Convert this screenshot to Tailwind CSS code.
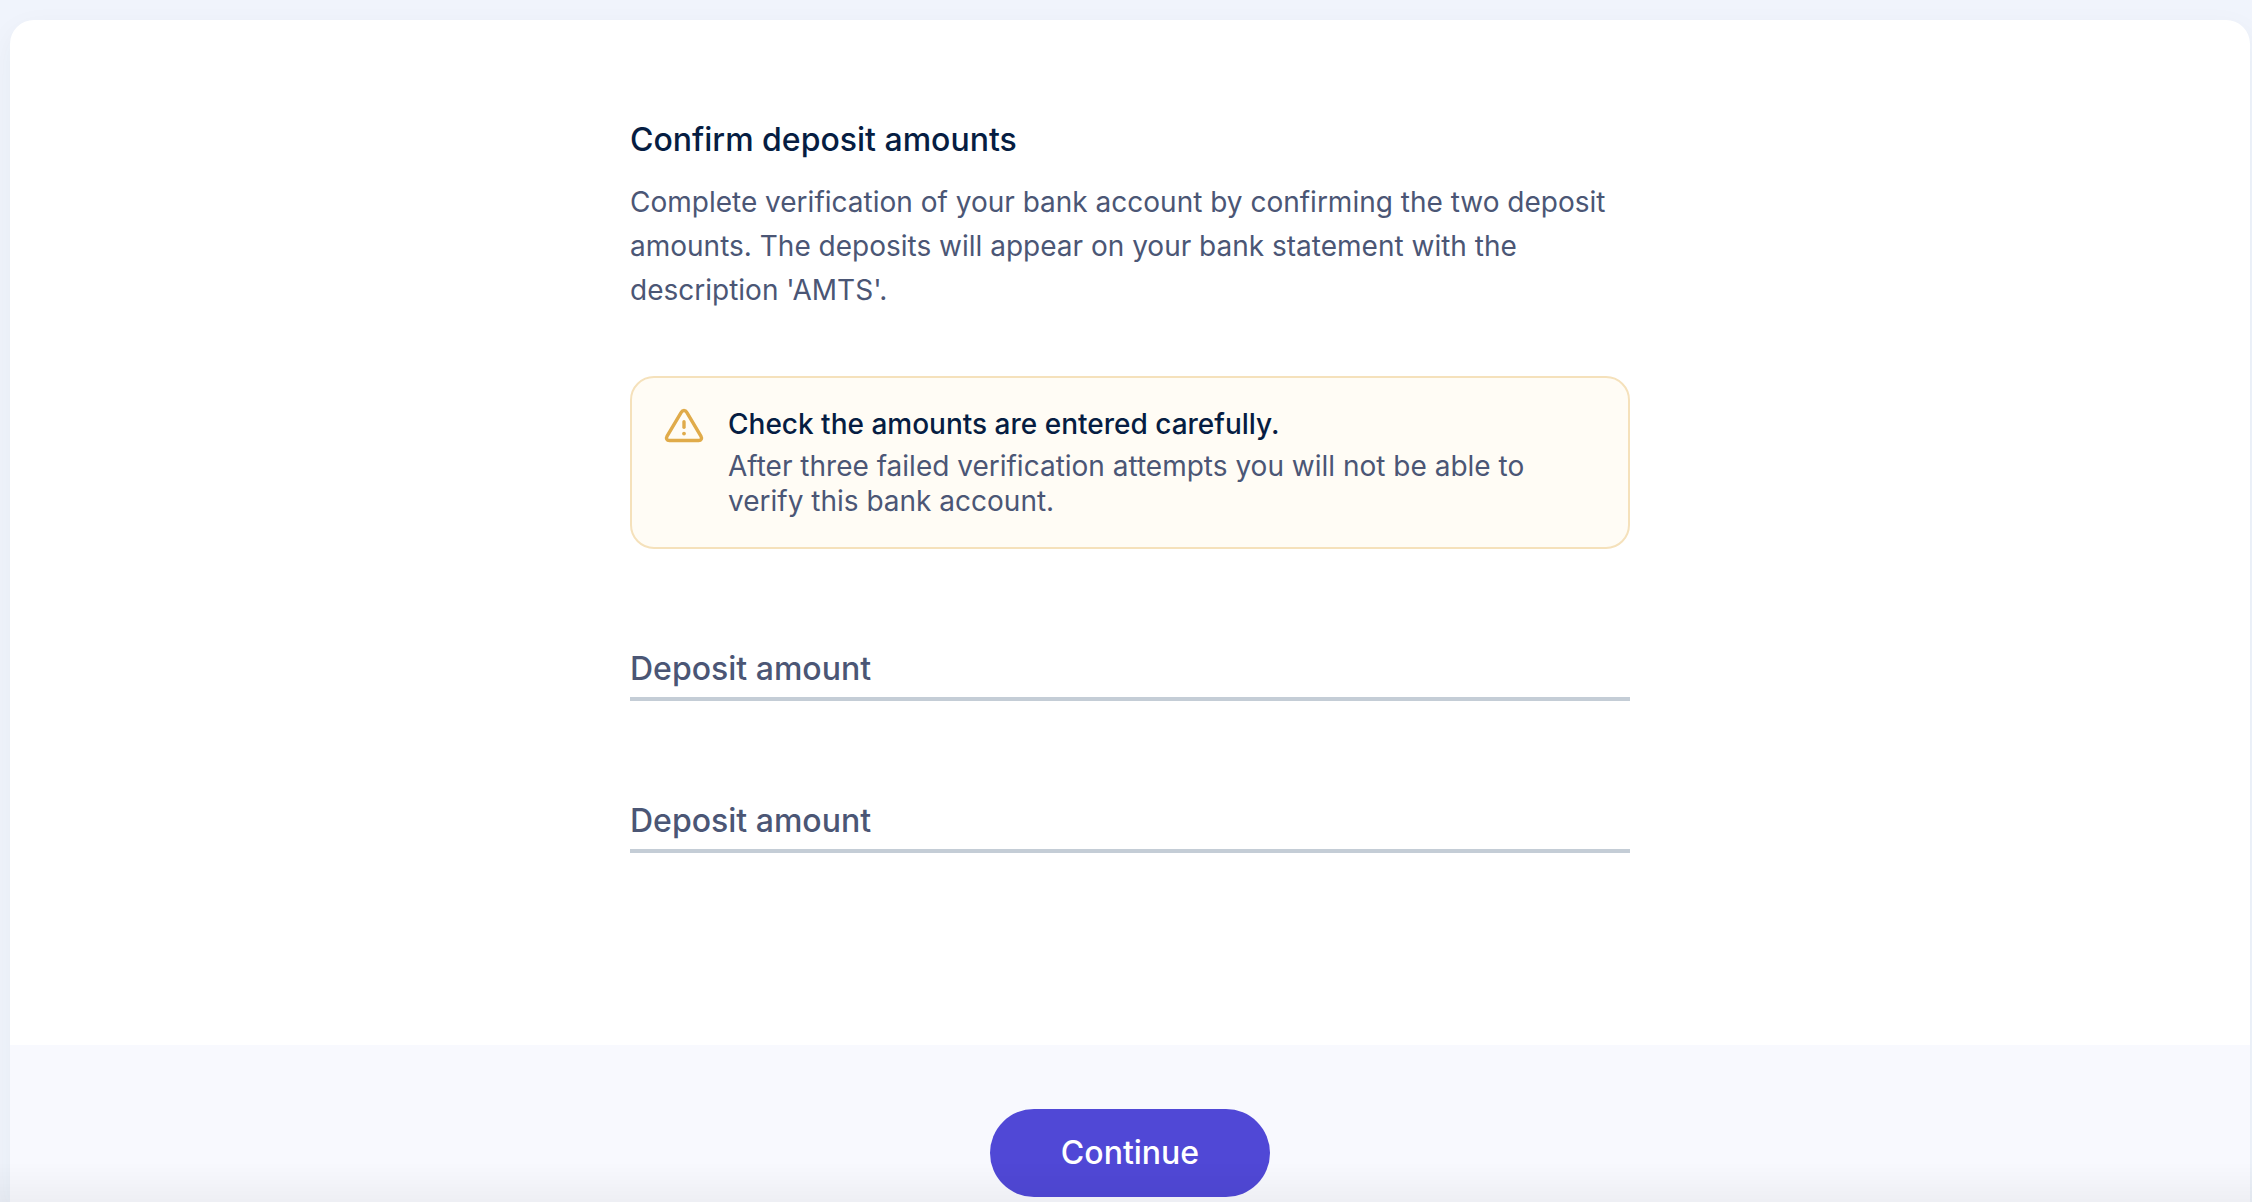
<!DOCTYPE html>
<html lang="en">
<head>
    <meta charset="UTF-8">
    <meta name="viewport" content="width=device-width, initial-scale=1.0">
    <title>Confirm deposit amounts</title>
    <script src="https://cdn.jsdelivr.net/npm/@tailwindcss/browser@4"></script>
</head>
<body class="bg-[#f0f4fc] font-['Inter',sans-serif] text-[#4b5675]">

    <div class="min-h-screen flex flex-col pt-5 pl-[10px] pr-[2px]">
        <main class="grow flex flex-col bg-white rounded-t-3xl shadow-[0_10px_30px_rgba(30,50,60,0.05)] overflow-hidden">

            <form id="depositForm" class="grow w-full max-w-[1000px] mx-auto pt-24 pb-48">
                <h1 class="text-[32px] leading-[48px] font-medium text-[#061d42]">Confirm deposit amounts</h1>
                <p class="mt-4 text-[28px] leading-[44px]">Complete verification of your bank account by confirming the two deposit amounts. The deposits will appear on your bank statement with the description 'AMTS'.</p>

                <div class="mt-16 flex gap-6 rounded-3xl border-2 border-[#f5e1bb] bg-[#fffcf5] pt-[26px] pb-7 px-8" role="alert">
                    <svg class="shrink-0 w-10 h-10 mt-[2px]" viewBox="0 0 40 40" fill="none" stroke="#e0ab4a" stroke-width="3.4" stroke-linecap="round" stroke-linejoin="round" aria-hidden="true">
                        <path d="M17.2 6.4 3.1 30.1C1.8 32.4 2.8 34.5 5.4 34.5H34.6C37.2 34.5 38.2 32.4 36.9 30.1L22.8 6.4C21.4 3.9 18.6 3.9 17.2 6.4Z"/>
                        <path d="M20 15.8V21.2"/>
                        <circle cx="20" cy="27.6" r="1.9" fill="#e0ab4a" stroke="none"/>
                    </svg>
                    <div class="text-[28px]">
                        <p class="leading-[40px] font-medium text-[#061d42]">Check the amounts are entered carefully.</p>
                        <p class="mt-[5px] leading-[35px]">After three failed verification attempts you will not be able to verify this bank account.</p>
                    </div>
                </div>

                <div class="relative mt-[100px]">
                    <input id="amount1" type="text" inputmode="decimal" placeholder=" " class="peer block w-full h-[52px] pb-2 border-b-4 border-[#c4cdd6] text-[32px] leading-[40px] font-medium outline-none focus:border-[#5048d6]">
                    <label for="amount1" class="absolute left-0 top-0 text-[32px] leading-[40px] font-medium cursor-text transition-all peer-focus:-top-8 peer-focus:text-2xl peer-[:not(:placeholder-shown)]:-top-8 peer-[:not(:placeholder-shown)]:text-2xl">Deposit amount</label>
                </div>
                <div class="relative mt-[100px]">
                    <input id="amount2" type="text" inputmode="decimal" placeholder=" " class="peer block w-full h-[52px] pb-2 border-b-4 border-[#c4cdd6] text-[32px] leading-[40px] font-medium outline-none focus:border-[#5048d6]">
                    <label for="amount2" class="absolute left-0 top-0 text-[32px] leading-[40px] font-medium cursor-text transition-all peer-focus:-top-8 peer-focus:text-2xl peer-[:not(:placeholder-shown)]:-top-8 peer-[:not(:placeholder-shown)]:text-2xl">Deposit amount</label>
                </div>
            </form>

            <footer class="flex justify-center bg-[#f8f9fe] pt-16 pb-[5px]">
                <button type="submit" form="depositForm" class="w-[280px] h-[88px] rounded-full bg-[#5048d6] text-white text-[32px] font-medium hover:bg-[#433bc4] transition">Continue</button>
            </footer>
        </main>
    </div>

    <!-- shade along the bottom edge -->
    <div class="fixed inset-x-0 bottom-0 h-10 bg-linear-to-t from-black/4 to-transparent pointer-events-none"></div>

</body>
</html>
